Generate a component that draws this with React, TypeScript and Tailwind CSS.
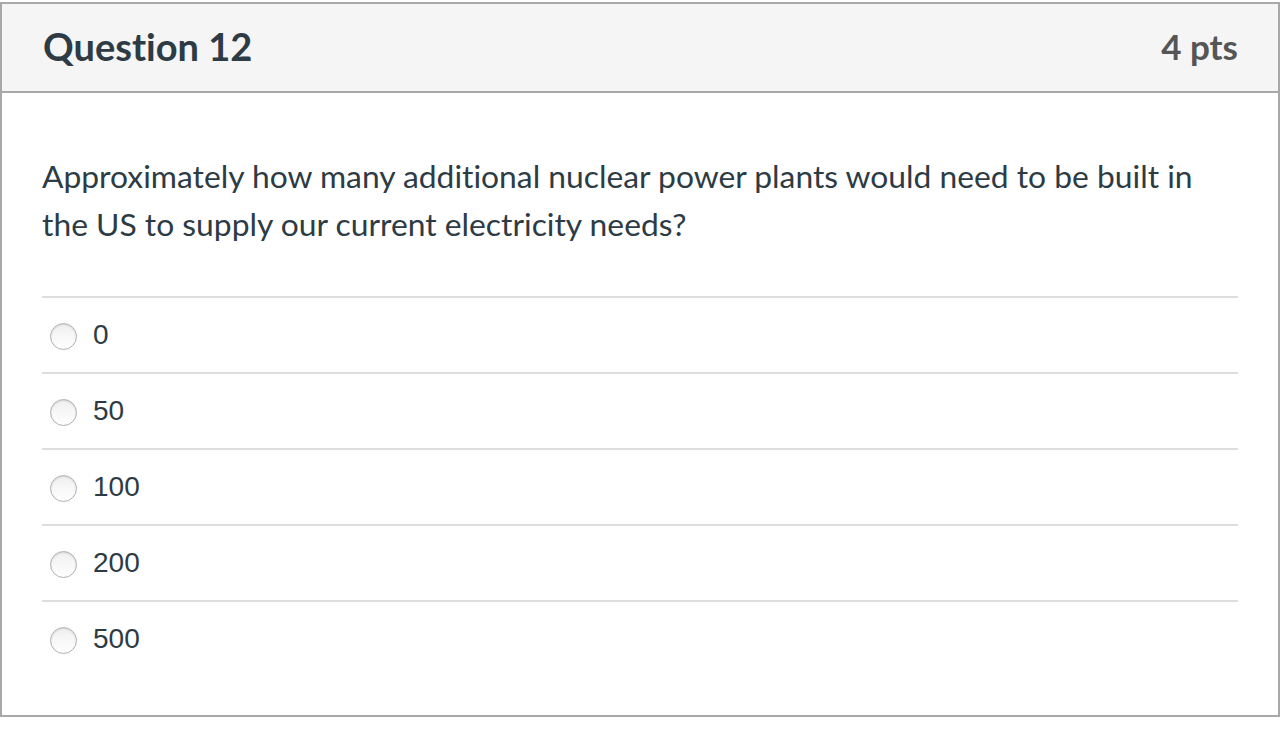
import React from "react";

const answers = ["0", "50", "100", "200", "500"];

export default function App() {
  return (
    <div className="w-[1284px] h-[730px] bg-white [font-variant-ligatures:none]">
      <div className="mt-[2px] w-[1280px] h-[715px] border-2 border-[#a8a8a8] flex flex-col">
        <div className="h-[89px] bg-[#f5f5f5] border-b-2 border-[#a8a8a8] flex items-center justify-between pl-[41px] pr-[40px] pb-[2px]">
          <span className="text-[38px] font-bold text-[#2d3b45]" style={{ fontFamily: "Lato, sans-serif" }}>
            Question 12
          </span>
          <span className="text-[35px] font-bold text-[#555555]" style={{ fontFamily: "Lato, sans-serif" }}>
            4 pts
          </span>
        </div>
        <div className="px-[40px] pt-[59px]">
          <p className="text-[31.8px] leading-[48px] text-[#2d3b45]" style={{ fontFamily: "Lato, sans-serif" }}>
            Approximately how many additional nuclear power plants would need to be built in the US to supply our current electricity needs?
          </p>
          <div className="mt-[48px]">
            {answers.map((a) => (
              <div key={a} className="border-t-2 border-[#dddddd] h-[76px] flex items-center">
                <span className="ml-[8px] mt-[2px] w-[27px] h-[27px] rounded-full border border-[#b0b0b0] bg-gradient-to-b from-[#f0f0f0] to-white shadow-[inset_0_1px_2px_rgba(0,0,0,0.12)]" />
                <span className="ml-[16px] text-[28px] text-[#2d3b45] leading-none" style={{ fontFamily: "'Liberation Sans', Arial, sans-serif" }}>
                  {a}
                </span>
              </div>
            ))}
          </div>
        </div>
      </div>
    </div>
  );
}
